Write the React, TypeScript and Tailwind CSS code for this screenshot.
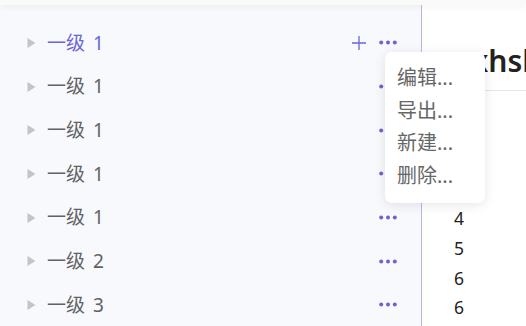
import React from 'react'

const rows = [
  { label: '一级 1', active: true },
  { label: '一级 1' },
  { label: '一级 1' },
  { label: '一级 1' },
  { label: '一级 1' },
  { label: '一级 2' },
  { label: '一级 3' },
]

const menu = ['编辑...', '导出...', '新建...', '删除...']

const Caret = () => (
  <svg width="9" height="12" viewBox="0 0 9 12" className="shrink-0">
    <path d="M0.5 1 L8.5 6 L0.5 11 Z" fill="#c0c4cc" />
  </svg>
)

const Dots = () => (
  <svg width="18" height="5" viewBox="0 0 18 5">
    <circle cx="2.2" cy="2.5" r="2" fill="#6c63d0" />
    <circle cx="9" cy="2.5" r="2" fill="#6c63d0" />
    <circle cx="15.8" cy="2.5" r="2" fill="#6c63d0" />
  </svg>
)

const Plus = () => (
  <svg width="16" height="16" viewBox="0 0 16 16">
    <path d="M8 1 V15 M1 8 H15" stroke="#6b66d6" strokeWidth="1.3" />
  </svg>
)

export default function App() {
  return (
    <div
      className="relative w-[526px] h-[326px] overflow-hidden bg-white"
      style={{ fontFamily: '"Noto Sans", "Noto Sans CJK SC", sans-serif' }}
    >
      <div className="h-[5px] bg-[#fafafa] shadow-[0_2px_6px_rgba(0,0,0,0.05)] relative z-10" />
      <div className="flex h-[321px]">
        <div className="w-[422px] shrink-0 bg-[#f8f9fc] border-r border-[#b9b6e6] pt-[16px]">
          {rows.map((r, i) => (
            <div key={i} className="flex items-center h-[43.7px] pl-[27px] pr-[24px]">
              <Caret />
              <span
                className={`ml-[11px] text-[19px] [word-spacing:3px] ${r.active ? 'text-[#6b66d6]' : 'text-[#606266]'}`}
              >
                {r.label}
              </span>
              <div className="ml-auto flex items-center gap-[12px]">
                {r.active && <Plus />}
                <Dots />
              </div>
            </div>
          ))}
        </div>
        <div className="flex-1 pl-[32px] pt-[36px] text-[#222]">
          <div className="text-[30px] font-semibold leading-[40px] whitespace-nowrap border-b border-[#e5e5e5] pb-[9px] -ml-[24px] pl-[24px]">
            axhsl
          </div>
          <div className="pt-[24px] text-[17.5px] leading-[29.7px]">
            {[1, 2, 3, 4, 5, 6, 6].map((n, i) => (
              <div key={i}>{n}</div>
            ))}
          </div>
        </div>
      </div>
      <div className="absolute left-[385px] top-[52px] w-[100px] py-[10px] bg-white rounded-[7px] shadow-[0_2px_12px_rgba(0,0,0,0.1)] z-20">
        {menu.map((m) => (
          <div key={m} className="pl-[12px] h-[32.7px] leading-[32.7px] text-[20px] text-[#666666] whitespace-nowrap">
            {m}
          </div>
        ))}
      </div>
    </div>
  )
}
